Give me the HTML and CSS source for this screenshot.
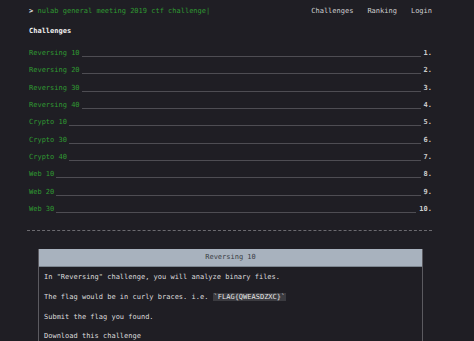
FILE: index.html
```html
<!DOCTYPE html>
<html lang="en">
<head>
<meta charset="UTF-8" />
<meta name="viewport" content="width=device-width, initial-scale=1" />
<title>nulab ctf</title>
<link rel="stylesheet" href="styles.css">
</head>
<body>
<div class="page">
  <header class="top">
    <div class="brand"><span class="prompt">&gt;</span> nulab general meeting 2019 ctf challenge<span class="cursor">|</span></div>
    <nav>
      <a href="#">Challenges</a>
      <a href="#">Ranking</a>
      <a href="#">Login</a>
    </nav>
  </header>

  <h2>Challenges</h2>
  <ol class="challenge-list">
    <li><a href="#">Reversing 10</a><span class="leader"></span><span class="num">1.</span></li>
    <li><a href="#">Reversing 20</a><span class="leader"></span><span class="num">2.</span></li>
    <li><a href="#">Reversing 30</a><span class="leader"></span><span class="num">3.</span></li>
    <li><a href="#">Reversing 40</a><span class="leader"></span><span class="num">4.</span></li>
    <li><a href="#">Crypto 10</a><span class="leader"></span><span class="num">5.</span></li>
    <li><a href="#">Crypto 30</a><span class="leader"></span><span class="num">6.</span></li>
    <li><a href="#">Crypto 40</a><span class="leader"></span><span class="num">7.</span></li>
    <li><a href="#">Web 10</a><span class="leader"></span><span class="num">8.</span></li>
    <li><a href="#">Web 20</a><span class="leader"></span><span class="num">9.</span></li>
    <li><a href="#">Web 30</a><span class="leader"></span><span class="num">10.</span></li>
  </ol>
  <hr class="divider">

  <section class="modal">
    <div class="modal-title">Reversing 10</div>
    <div class="modal-body">
      <p>In "Reversing" challenge, you will analyze binary files.</p>
      <p>The flag would be in curly braces. i.e. <code>`FLAG{QWEASDZXC}`</code></p>
      <p>Submit the flag you found.</p>
      <p>Download this challenge</p>
    </div>
  </section>
</div>
</body>
</html>
```

FILE: styles.css
```css
body {
  margin: 0; background: #1f1e24; color: #dcdcdc; font-family: 'DejaVu Sans Mono', 'Liberation Mono', monospace; font-size: 7px; line-height: 9px;
}
.page {
  width: 403px; margin-left: 29px; padding-top: 7px;
}
.top {
  display: flex; justify-content: space-between;
}
.brand {
  color: #2f9a32;
}
.prompt {
  color: #e8e8e8; font-weight: 700;
}
.top nav {
  display: flex; gap: 14px;
}
.top nav a {
  color: #cfcfcf; text-decoration: none;
}
h2 {
  font-size: 7px; font-weight: 700; color: #f2f2f2; margin: 11px 0 9px;
}
.challenge-list {
  list-style: none; margin: 0; padding: 0;
}
.challenge-list li {
  display: flex; align-items: center; height: 17.33px;
}
.challenge-list a {
  color: #2f9a32; text-decoration: none;
}
.leader {
  flex: 1; height: 0; border-bottom: 1px solid #4e4d53; margin: 6px 3px 0 2px;
}
.num {
  color: #cdcdcd; font-weight: 700;
}
.divider {
  border: 0; border-top: 1px dashed #6c6b70; margin: 12px 0 0 -2px;
}
.modal {
  margin: 18px 9px 0 9px; border: 1px solid #5b5a60; border-top: 0;
}
.modal-title {
  background: #a8b2be; color: #3a3d44; text-align: center; height: 17px; line-height: 17px; border-bottom: 1px solid #7d8690;
}
.modal-body {
  padding: 6px 5px 10px;
}
.modal-body p {
  margin: 0 0 10.7px;
}
code {
  font-family: inherit; background: #3b3b40; color: #e6e6e6; padding: 0 1px;
}
```
